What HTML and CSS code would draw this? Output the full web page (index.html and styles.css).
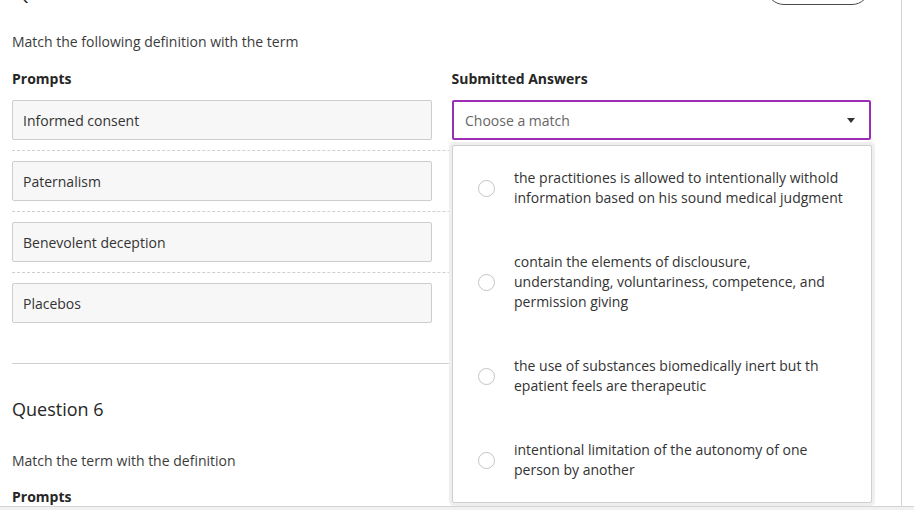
FILE: index.html
```html
<!DOCTYPE html>
<html>
<head>
    <meta charset="UTF-8">
    <link rel="stylesheet" href="styles.css">
</head>
<body>
<div class="page">
    <div class="content">
        <div class="question-head">
            <h2 class="question-title">Question 5</h2>
            <button class="pill-btn">Clear</button>
        </div>

        <div class="question">
            <p class="instructions">Match the following definition with the term</p>
            <div class="labels">
                <div class="col-label">Prompts</div>
                <div class="col-label">Submitted Answers</div>
            </div>

            <div class="match-row">
                <div class="prompt">Informed consent</div>
                <div class="answer">
                    <div class="select open">
                        <span>Choose a match</span>
                        <span class="caret"></span>
                    </div>
                    <ul class="options">
                        <li><span class="radio"></span><span class="opt-text">the practitiones is allowed to intentionally withold information based on his sound medical judgment</span></li>
                        <li><span class="radio"></span><span class="opt-text">contain the elements of disclousure, understanding, voluntariness, competence, and permission giving</span></li>
                        <li><span class="radio"></span><span class="opt-text">the use of substances biomedically inert but th epatient feels are therapeutic</span></li>
                        <li><span class="radio"></span><span class="opt-text">intentional limitation of the autonomy of one person by another</span></li>
                    </ul>
                </div>
            </div>
            <!-- the other answer selects sit under the open menu -->
            <div class="match-row">
                <div class="prompt">Paternalism</div>
                <div class="answer"></div>
            </div>
            <div class="match-row">
                <div class="prompt">Benevolent deception</div>
                <div class="answer"></div>
            </div>
            <div class="match-row">
                <div class="prompt">Placebos</div>
                <div class="answer"></div>
            </div>
        </div>

        <div class="question next">
            <h2 class="question-title">Question 6</h2>
            <p class="instructions">Match the term with the definition</p>
            <div class="labels">
                <div class="col-label">Prompts</div>
            </div>
        </div>
    </div>
</div>
<div class="bottom-bar"></div>
</body>
</html>
```

FILE: styles.css
```css
* {
    box-sizing: border-box;
}

body {
    margin: 0;
    font-family: "Open Sans", "Liberation Sans", sans-serif;
    font-size: 14px;
    color: #333;
    background: #fff;
}

.page {
    width: 902px;
    height: 506px;
    border-right: 1px solid #d4d4d4;
    overflow: hidden;
}

.content {
    width: 871px;
    padding-left: 12px;
}

.question-head {
    display: flex;
    justify-content: space-between;
    align-items: flex-end;
    height: 36px;
    margin-top: -31px;
}

.question-title {
    margin: 0;
    font-size: 18px;
    font-weight: 400;
    color: #262626;
}

.question-head .question-title {
    padding-left: 4px;
}

.pill-btn {
    width: 104px;
    height: 36px;
    margin-right: 1px;
    border: 1.5px solid #4a4a4a;
    border-radius: 18px;
    background: #fff;
    font-family: inherit;
    font-size: 14px;
    color: #333;
}

.instructions {
    margin: 0;
    line-height: 20px;
    color: #3b3b3b;
}

.question > .instructions {
    margin-top: 27px;
}

.labels {
    display: flex;
    gap: 20px;
    margin-top: 17px;
    margin-bottom: 11px;
}

.col-label {
    width: 420px;
    font-weight: 700;
    line-height: 20px;
    color: #262626;
}

.match-row {
    display: flex;
    gap: 20px;
    padding-bottom: 10px;
    margin-bottom: 10px;
    border-bottom: 1px dashed #cfcfcf;
}

.match-row:last-child {
    margin-bottom: 0;
    padding-bottom: 40px;
    border-bottom: 1px solid #cfcfcf;
}

.prompt {
    flex: none;
    width: 420px;
    height: 40px;
    padding: 0 10px;
    display: flex;
    align-items: center;
    background: #f7f7f7;
    border: 1px solid #cdcdcd;
    border-radius: 2px;
    color: #333;
}

.answer {
    flex: none;
    width: 419px;
    position: relative;
}

.select {
    height: 40px;
    padding: 0 14px 0 11px;
    display: flex;
    align-items: center;
    justify-content: space-between;
    border: 1px solid #cdcdcd;
    border-radius: 2px;
    color: #666;
    background: #fff;
}

.select.open {
    border: 2px solid #9c2db5;
}

.caret {
    width: 0;
    height: 0;
    border-left: 4px solid transparent;
    border-right: 4px solid transparent;
    border-top: 5px solid #333;
}

.options {
    position: absolute;
    top: 45px;
    left: 0;
    width: 420px;
    margin: 0;
    padding: 0;
    list-style: none;
    background: #fff;
    border: 1px solid #cfcfcf;
    border-radius: 2px;
    box-shadow: 0 0 0 3px #efefef;
    z-index: 2;
}

.options li {
    display: flex;
    align-items: center;
    gap: 19px;
    padding: 22px 20px 22px 25px;
}

.radio {
    flex: none;
    width: 17px;
    height: 17px;
    border: 1px solid #c4c4c4;
    border-radius: 50%;
    background: #fff;
}

.opt-text {
    width: 335px;
    line-height: 20px;
    color: #333;
}

.question.next {
    padding-top: 33px;
}

.question.next .instructions {
    margin-top: 30px;
}

.question.next .labels {
    margin-top: 16px;
}

.bottom-bar {
    height: 4px;
    border-top: 1px solid #d4d4d4;
    background: #f1f1f1;
}
```
